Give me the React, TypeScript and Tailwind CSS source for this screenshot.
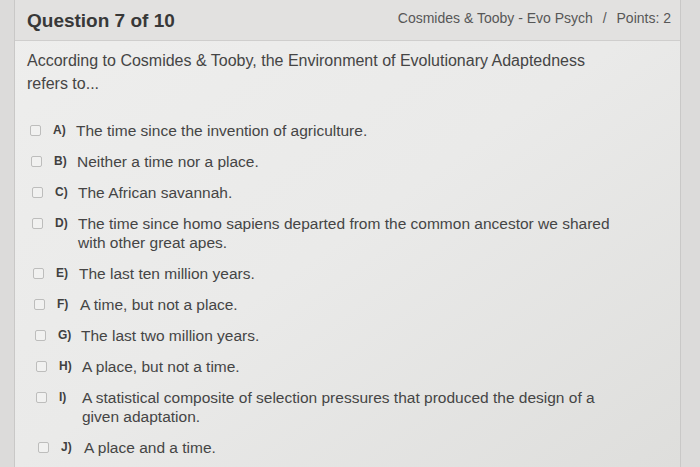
import React from "react";

const options: { key: string; text: string; off: string }[] = [
  { key: "A)", text: "The time since the invention of agriculture.", off: "pl-[0px]" },
  { key: "B)", text: "Neither a time nor a place.", off: "pl-[1px]" },
  { key: "C)", text: "The African savannah.", off: "pl-[2px]" },
  {
    key: "D)",
    text: "The time since homo sapiens departed from the common ancestor we shared with other great apes.",
    off: "pl-[2px]",
  },
  { key: "E)", text: "The last ten million years.", off: "pl-[3px]" },
  { key: "F)", text: "A time, but not a place.", off: "pl-[4px]" },
  { key: "G)", text: "The last two million years.", off: "pl-[5px]" },
  { key: "H)", text: "A place, but not a time.", off: "pl-[6px]" },
  {
    key: "I)",
    text: "A statistical composite of selection pressures that produced the design of a given adaptation.",
    off: "pl-[6px]",
  },
  { key: "J)", text: "A place and a time.", off: "pl-[8px]" },
];

export default function App() {
  return (
    <div className="w-[700px] h-[467px] overflow-hidden bg-[#dcdbda] pl-[14px] pr-[19px] font-['Liberation_Sans',Arial,sans-serif]">
      <div className="h-full flex flex-col border-x border-[#c9c8c7] bg-gradient-to-br from-[#eeeeed] via-[#eaeae9] to-[#dededc]">
        <div className="h-[41px] shrink-0 flex items-start justify-between border-b border-[#cfcecd] bg-[#e2e1e0] pl-[12px] pr-[9px] pt-[10px]">
          <div className="text-[19px] leading-[22px] font-bold text-[#383838]">Question 7 of 10</div>
          <div className="text-[14px] leading-[16px] text-[#575757]">
            Cosmides &amp; Tooby - Evo Psych <span className="mx-[6px]">/</span> Points: 2
          </div>
        </div>
        <div className="pl-[12px] pt-[8px]">
          <p className="w-[585px] text-[16px] leading-[23px] text-[#454545]">
            According to Cosmides &amp; Tooby, the Environment of Evolutionary Adaptedness refers to...
          </p>
        </div>
        <div className="flex flex-col gap-[12px] pt-[26px] pl-[15px]">
          {options.map((o) => (
            <div key={o.key} className={`flex items-start ${o.off}`}>
              <div className="mt-[4px] w-[11px] h-[11px] shrink-0 rounded-[2px] border border-[#bdbdbc] bg-[#f1f1f0]" />
              <div className="w-[23px] ml-[12px] shrink-0 text-[12px] leading-[19px] font-bold text-[#404040]">
                {o.key}
              </div>
              <div className="w-[548px] text-[15.5px] leading-[19px] text-[#454545]">{o.text}</div>
            </div>
          ))}
        </div>
      </div>
    </div>
  );
}
